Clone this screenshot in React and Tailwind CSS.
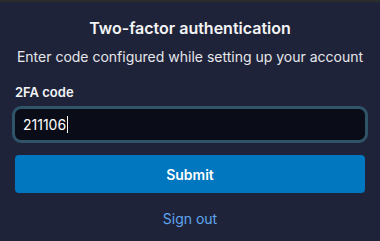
export default function App() {
  return (
    <div className="w-[380px] h-[241px] bg-[#1f2339] flex flex-col overflow-hidden" style={{ fontFamily: 'Inter, "Noto Sans", sans-serif' }}>
      <div className="h-[2px] bg-[#2b2d2c] shrink-0" />
      <div className="flex flex-col px-[12px] pt-[14px]">
        <h1 className="text-center text-[16px] leading-[24px] font-semibold text-[#f3f4f6]">Two-factor authentication</h1>
        <p className="mt-[7px] text-center text-[14px] leading-[20px] text-[#e5e7eb]">Enter code configured while setting up your account</p>
        <label className="mt-[16px] pl-[3px] text-[13px] leading-[18px] font-semibold text-[#f3f4f6]">2FA code</label>
        <div className="mt-[5px] h-[37px] rounded-[9px] border-[3px] border-[#2f5468] bg-[#0a0d17] flex items-center pl-[8px]">
          <span className="text-[14px] text-white leading-[20px]">211106</span>
          <span className="ml-[1px] w-[1px] h-[17px] bg-white" />
        </div>
        <div className="px-[3px] mt-[12px]">
          <button className="w-full h-[38px] rounded-[4px] bg-[#0077be] text-white text-[14px] font-semibold">Submit</button>
        </div>
        <div className="mt-[16px] text-center text-[14px] leading-[20px] text-[#5ea6ef]">Sign out</div>
      </div>
    </div>
  );
}
